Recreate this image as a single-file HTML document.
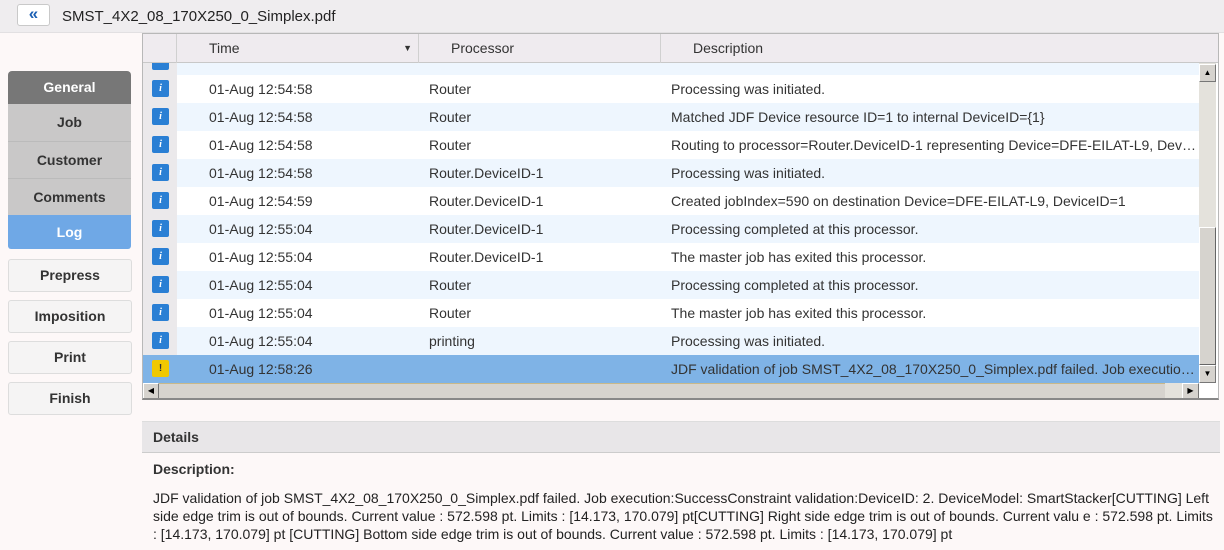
<!DOCTYPE html><html><head><style>
*{margin:0;padding:0;box-sizing:border-box}
body{width:1224px;height:550px;overflow:hidden;background:#fdf8f8;font-family:"Liberation Sans",Arial,sans-serif;font-size:14px;color:#333;position:relative}
.a{position:absolute}
.top{left:0;top:0;width:1224px;height:33px;background:#efedef;border-bottom:1px solid #e2e0e2}
.back{left:17px;top:4px;width:33px;height:22px;background:#fff;border:1px solid #c9c9c9;border-radius:3px;color:#1a5fb4;font-weight:bold;font-size:17px;text-align:center;line-height:18px}
.title{left:62px;top:8px;font-size:15px;color:#222}
.nav{left:8px;width:123px;text-align:center;font-weight:bold;font-size:14px}
.btn{left:8px;width:124px;height:33px;background:#f5f4f4;border:1px solid #ddd;border-radius:3px;text-align:center;line-height:31px;font-weight:bold;color:#333}
.grid{left:142px;top:33px;width:1077px;height:367px;border:1px solid #b8b8b8;border-bottom:2px solid #888;background:#fff;overflow:hidden}
.hdr{left:0;top:0;width:1077px;height:29px;background:#efebef;border-bottom:1px solid #c8c8c8;font-size:14px;z-index:5}
.hc{top:0;height:29px;line-height:28px;border-right:1px solid #d0d0d0}
.row{left:0;width:1056px;height:28px;line-height:28px}
.row .ic{position:absolute;left:0;top:0;width:34px;height:28px;background:#ebe9eb}
.row .ic b{position:absolute;left:9px;top:5px;width:17px;height:17px;background:#2a7fd4;border-radius:2px;color:#fff;font-size:10px;line-height:17px;text-align:center;font-style:italic;font-family:"Liberation Serif",serif}
.row span{position:absolute;top:0;white-space:nowrap;overflow:hidden}
.t{left:66px}.p{left:286px}.d{left:528px;width:526px;text-overflow:ellipsis}
.w{background:#fff}.b{background:#eef6fe}.s{background:#7fb3e6}
</style></head><body>
<div class="a top"></div>
<div class="a back">«</div>
<div class="a title">SMST_4X2_08_170X250_0_Simplex.pdf</div>

<div class="a nav" style="top:71px;height:33px;line-height:33px;background:#777;color:#fff;border-radius:4px 4px 0 0">General</div>
<div class="a nav" style="top:104px;height:37px;line-height:37px;background:#c9c8c8">Job</div>
<div class="a nav" style="top:141px;height:37px;line-height:37px;background:#c9c8c8;border-top:1px solid #bbb">Customer</div>
<div class="a nav" style="top:178px;height:37px;line-height:37px;background:#c9c8c8;border-top:1px solid #bbb">Comments</div>
<div class="a nav" style="top:215px;height:34px;line-height:34px;background:#6fa8e6;color:#fff;border-radius:0 0 3px 3px">Log</div>
<div class="a btn" style="top:259px">Prepress</div>
<div class="a btn" style="top:300px">Imposition</div>
<div class="a btn" style="top:341px">Print</div>
<div class="a btn" style="top:382px">Finish</div>

<div class="a grid">
<div class="a row b" style="top:29px;height:12px;overflow:hidden"><div class="ic" style="height:12px"><b style="top:-10px"></b></div></div>
<div class="a row w" style="top:41px"><div class="ic"><b>i</b></div><span class="t">01-Aug 12:54:58</span><span class="p">Router</span><span class="d">Processing was initiated.</span></div>
<div class="a row b" style="top:69px"><div class="ic"><b>i</b></div><span class="t">01-Aug 12:54:58</span><span class="p">Router</span><span class="d">Matched JDF Device resource ID=1 to internal DeviceID={1}</span></div>
<div class="a row w" style="top:97px"><div class="ic"><b>i</b></div><span class="t">01-Aug 12:54:58</span><span class="p">Router</span><span class="d">Routing to processor=Router.DeviceID-1 representing Device=DFE-EILAT-L9, DeviceID=1</span></div>
<div class="a row b" style="top:125px"><div class="ic"><b>i</b></div><span class="t">01-Aug 12:54:58</span><span class="p">Router.DeviceID-1</span><span class="d">Processing was initiated.</span></div>
<div class="a row w" style="top:153px"><div class="ic"><b>i</b></div><span class="t">01-Aug 12:54:59</span><span class="p">Router.DeviceID-1</span><span class="d">Created jobIndex=590 on destination Device=DFE-EILAT-L9, DeviceID=1</span></div>
<div class="a row b" style="top:181px"><div class="ic"><b>i</b></div><span class="t">01-Aug 12:55:04</span><span class="p">Router.DeviceID-1</span><span class="d">Processing completed at this processor.</span></div>
<div class="a row w" style="top:209px"><div class="ic"><b>i</b></div><span class="t">01-Aug 12:55:04</span><span class="p">Router.DeviceID-1</span><span class="d">The master job has exited this processor.</span></div>
<div class="a row b" style="top:237px"><div class="ic"><b>i</b></div><span class="t">01-Aug 12:55:04</span><span class="p">Router</span><span class="d">Processing completed at this processor.</span></div>
<div class="a row w" style="top:265px"><div class="ic"><b>i</b></div><span class="t">01-Aug 12:55:04</span><span class="p">Router</span><span class="d">The master job has exited this processor.</span></div>
<div class="a row b" style="top:293px"><div class="ic"><b>i</b></div><span class="t">01-Aug 12:55:04</span><span class="p">printing</span><span class="d">Processing was initiated.</span></div>
<div class="a row s" style="top:321px"><div class="ic" style="background:#7fb3e6"><b style="background:#f0c800;color:#333;font-style:normal;font-family:'Liberation Sans';font-weight:bold">!</b></div><span class="t">01-Aug 12:58:26</span><span class="p"></span><span class="d">JDF validation of job SMST_4X2_08_170X250_0_Simplex.pdf failed. Job execution:SuccessConstraint</span></div>
<div class="a hdr">
<div class="a hc" style="left:0;width:34px"></div>
<div class="a hc" style="left:34px;width:242px;padding-left:32px">Time<span style="position:absolute;right:6px;top:0;font-size:9px">▼</span></div>
<div class="a hc" style="left:276px;width:242px;padding-left:32px">Processor</div>
<div class="a hc" style="left:518px;width:559px;padding-left:32px;border:0">Description</div>
</div>
<!-- vscroll -->
<div class="a" style="left:1056px;top:29px;width:17px;height:320px;background:#e4e2dc"></div>
<div class="a" style="left:1056px;top:30px;width:17px;height:18px;background:#d6d3ce;border:1px solid #fff;border-right-color:#777;border-bottom-color:#777;font-size:8px;text-align:center;line-height:16px;color:#000">▲</div>
<div class="a" style="left:1056px;top:193px;width:17px;height:138px;background:#d6d3ce;border:1px solid #fff;border-right-color:#666;border-bottom-color:#666"></div>
<div class="a" style="left:1056px;top:331px;width:17px;height:18px;background:#d6d3ce;border:1px solid #fff;border-right-color:#777;border-bottom-color:#777;font-size:8px;text-align:center;line-height:16px;color:#000">▼</div>
<!-- hscroll -->
<div class="a" style="left:0;top:349px;width:1056px;height:16px;background:#d6d3ce;border-top:1px solid #c8b88a"></div>
<div class="a" style="left:0;top:349px;width:16px;height:16px;background:#d6d3ce;border:1px solid #fff;border-right-color:#777;border-bottom-color:#777;font-size:8px;line-height:14px;text-align:center;color:#000">◀</div>
<div class="a" style="left:1022px;top:349px;width:17px;height:16px;background:#e4e2dc"></div>
<div class="a" style="left:1039px;top:349px;width:17px;height:16px;background:#d6d3ce;border:1px solid #fff;border-right-color:#777;border-bottom-color:#777;font-size:8px;line-height:14px;text-align:center;color:#000">▶</div>
<div class="a" style="left:1056px;top:349px;width:21px;height:16px;background:#fff"></div>
</div>

<div class="a" style="left:142px;top:421px;width:1078px;height:32px;background:#e8e6e8;border-top:1px solid #ddd;border-bottom:1px solid #ccc;padding-left:11px;line-height:30px;font-weight:bold;font-size:14px">Details</div>
<div class="a" style="left:153px;top:461px;font-weight:bold;font-size:14px">Description:</div>
<div class="a" style="left:153px;top:489px;width:1062px;font-size:14px;line-height:18px;color:#222">JDF validation of job SMST_4X2_08_170X250_0_Simplex.pdf failed. Job execution:SuccessConstraint validation:DeviceID: 2. DeviceModel: SmartStacker[CUTTING] Left side edge trim is out of bounds. Current value : 572.598 pt. Limits : [14.173, 170.079] pt[CUTTING] Right side edge trim is out of bounds. Current valu e : 572.598 pt. Limits : [14.173, 170.079] pt [CUTTING] Bottom side edge trim is out of bounds. Current value : 572.598 pt. Limits : [14.173, 170.079] pt</div>
</body></html>
